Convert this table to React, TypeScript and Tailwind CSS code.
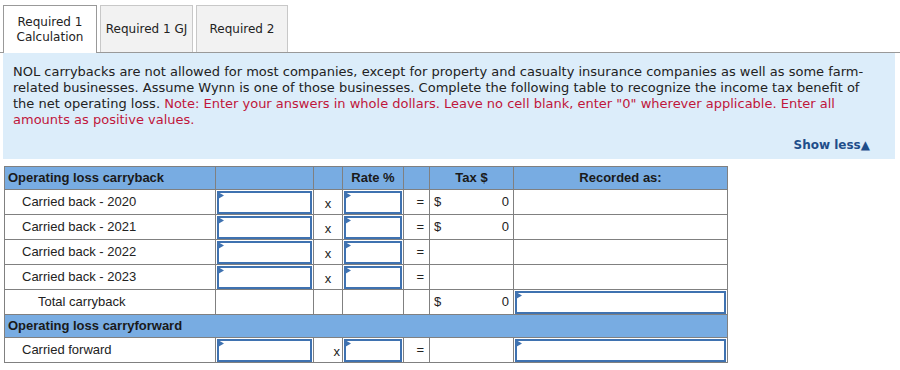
import React from "react";

const verdana = { fontFamily: "Verdana, 'DejaVu Sans', sans-serif" };
const arial = { fontFamily: "'Liberation Sans', Arial, sans-serif" };

function Entry({ className = "" }: { className?: string }) {
  return (
    <div className={`relative h-[23px] border-2 border-[#3f72b0] bg-white ${className}`}>
      {/* little corner flag on answer boxes */}
      <svg className="absolute -left-[1px] -top-[1px]" width="6" height="7" viewBox="0 0 6 7">
        <path d="M0 0 L6 3.5 L0 7 Z" fill="#3f72b0" />
      </svg>
    </div>
  );
}

type Row = { label: string; tax: boolean };

const backRows: Row[] = [
  { label: "Carried back - 2020", tax: true },
  { label: "Carried back - 2021", tax: true },
  { label: "Carried back - 2022", tax: false },
  { label: "Carried back - 2023", tax: false },
];

const td = "border border-[#808080] p-0 h-[25px]";

export default function App() {
  return (
    <div className="w-[900px] h-[370px] bg-white text-[#222] overflow-hidden">
      {/* tabs */}
      <div className="flex pt-[5px] pl-[3px] gap-[3px] h-[53px] border-b border-[#999]" style={verdana}>
        <div className="w-[94px] h-[48px] bg-white border border-b-0 border-[#999] flex items-center justify-center text-center text-[12px] leading-[15px] -mb-px">
          Required 1
          <br />
          Calculation
        </div>
        <div className="w-[93px] h-[47px] bg-[#f2f2f2] border border-b-0 border-[#c8c8c8] flex items-center justify-center text-[12px]">
          Required 1 GJ
        </div>
        <div className="w-[92px] h-[47px] bg-[#f2f2f2] border border-b-0 border-[#c8c8c8] flex items-center justify-center text-[12px]">
          Required 2
        </div>
        <div className="flex-1" />
      </div>

      {/* instructions panel */}
      <div className="ml-[3px] w-[892px] h-[106px] bg-[#dcedfa] px-[10px] pt-[11px] relative" style={verdana}>
        <p className="w-[851px] text-[13px] leading-[16px] text-[#222]">
          NOL carrybacks are not allowed for most companies, except for property and casualty insurance companies as well as some farm-related businesses. Assume Wynn is one of those businesses. Complete the following table to recognize the income tax benefit of the net operating loss.{" "}
          <span className="text-[#c0163b]">
            Note: Enter your answers in whole dollars. Leave no cell blank, enter "0" wherever applicable. Enter all amounts as positive values.
          </span>
        </p>
        <div className="absolute right-[25px] top-[83px] text-[12px] font-bold text-[#1f4e8a]">Show less▲</div>
      </div>

      {/* table */}
      <div className="pl-[4px] pt-[7px]" style={arial}>
        <table className="border-collapse text-[13px] table-fixed w-[723px]">
          <colgroup>
            <col className="w-[211px]" />
            <col className="w-[98px]" />
            <col className="w-[29px]" />
            <col className="w-[61px]" />
            <col className="w-[26px]" />
            <col className="w-[84px]" />
            <col className="w-[214px]" />
          </colgroup>
          <thead>
            <tr className="bg-[#78ace2] font-bold text-[13px] text-[#1a1a1a]">
              <td className="border border-[#808080] h-[23px] px-[3px]">Operating loss carryback</td>
              <td className="border border-[#808080]" />
              <td className="border border-[#808080]" />
              <td className="border border-[#808080] text-center">Rate %</td>
              <td className="border border-[#808080]" />
              <td className="border border-[#808080] text-center">Tax $</td>
              <td className="border border-[#808080] text-center">Recorded as:</td>
            </tr>
          </thead>
          <tbody>
            {backRows.map((r) => (
              <tr key={r.label}>
                <td className={`${td} pl-[17px]`}>{r.label}</td>
                <td className={`${td} px-[1px]`}>
                  <Entry />
                </td>
                <td className={`${td} text-center pt-[3px]`}>x</td>
                <td className={`${td} px-[1px]`}>
                  <Entry />
                </td>
                <td className={`${td} text-right pr-[5px]`}>=</td>
                <td className={td}>
                  {r.tax && (
                    <div className="flex justify-between pl-[4px] pr-[4px]">
                      <span>$</span>
                      <span>0</span>
                    </div>
                  )}
                </td>
                <td className={td} />
              </tr>
            ))}
            <tr>
              <td className={`${td} pl-[33px]`}>Total carryback</td>
              <td className={td} />
              <td className={td} />
              <td className={td} />
              <td className={td} />
              <td className={td}>
                <div className="flex justify-between pl-[4px] pr-[4px]">
                  <span>$</span>
                  <span>0</span>
                </div>
              </td>
              <td className={`${td} px-[1px]`}>
                <Entry />
              </td>
            </tr>
            <tr className="bg-[#78ace2]">
              <td colSpan={7} className="border border-[#808080] h-[23px] px-[3px] font-bold text-[13px] text-[#1a1a1a]">
                Operating loss carryforward
              </td>
            </tr>
            <tr>
              <td className={`${td} pl-[17px] h-[23px]`}>Carried forward</td>
              <td className={`${td} px-[1px] h-[23px]`}>
                <Entry className="h-[22px]" />
              </td>
              <td className={`${td} text-right pr-[2px] pt-[3px] h-[23px]`}>x</td>
              <td className={`${td} px-[1px] h-[23px]`}>
                <Entry className="h-[22px]" />
              </td>
              <td className={`${td} text-right pr-[5px] h-[23px]`}>=</td>
              <td className={`${td} h-[23px]`} />
              <td className={`${td} px-[1px] h-[23px]`}>
                <Entry className="h-[22px]" />
              </td>
            </tr>
          </tbody>
        </table>
      </div>
    </div>
  );
}
